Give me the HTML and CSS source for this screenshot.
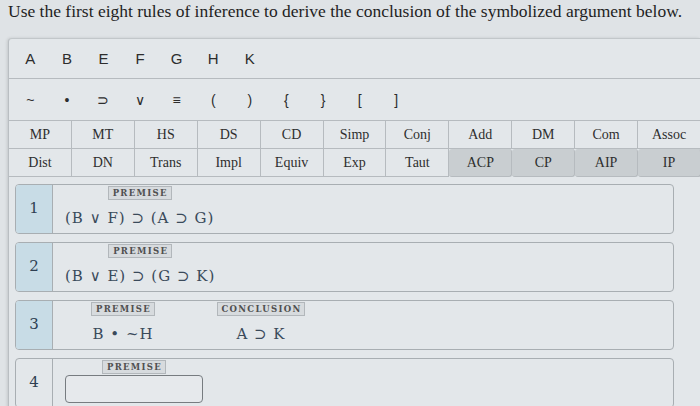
FILE: index.html
```html
<!DOCTYPE html>
<html>
<head>
<meta charset="utf-8">
<link rel="stylesheet" href="styles.css">
</head>
<body>
<p class="title">Use the first eight rules of inference to derive the conclusion of the symbolized argument below.</p>
<div class="panel">
  <div class="keys vars">
    <span>A</span><span>B</span><span>E</span><span>F</span><span>G</span><span>H</span><span>K</span>
  </div>
  <div class="keys ops">
    <span>~</span><span>•</span><span>⊃</span><span>∨</span><span>≡</span><span>(</span><span>)</span><span>{</span><span>}</span><span>[</span><span>]</span>
  </div>
  <div class="rules">
    <div class="rule">MP</div><div class="rule">MT</div><div class="rule">HS</div><div class="rule">DS</div><div class="rule">CD</div><div class="rule">Simp</div><div class="rule">Conj</div><div class="rule">Add</div><div class="rule">DM</div><div class="rule">Com</div><div class="rule">Assoc</div>
    <div class="rule">Dist</div><div class="rule">DN</div><div class="rule">Trans</div><div class="rule">Impl</div><div class="rule">Equiv</div><div class="rule">Exp</div><div class="rule">Taut</div><div class="rule dark">ACP</div><div class="rule dark">CP</div><div class="rule dark">AIP</div><div class="rule dark">IP</div>
  </div>
  <div class="lines">
    <div class="line">
      <div class="num given">1</div>
      <div class="body">
        <div class="stack"><span class="tag">PREMISE</span><span class="formula">(B ∨ F) ⊃ (A ⊃ G)</span></div>
      </div>
    </div>
    <div class="line">
      <div class="num given">2</div>
      <div class="body">
        <div class="stack"><span class="tag">PREMISE</span><span class="formula">(B ∨ E) ⊃ (G ⊃ K)</span></div>
      </div>
    </div>
    <div class="line">
      <div class="num given">3</div>
      <div class="body">
        <div class="stack"><span class="tag">PREMISE</span><span class="formula">B • ~H</span></div>
        <div class="stack"><span class="tag">CONCLUSION</span><span class="formula">A ⊃ K</span></div>
      </div>
    </div>
    <div class="line">
      <div class="num">4</div>
      <div class="body">
        <div class="stack"><span class="tag">PREMISE</span><span class="input"></span></div>
      </div>
    </div>
  </div>
</div>
</body>
</html>
```
FILE: styles.css
```css
html, body {
  margin: 0;
  padding: 0;
  background: #dfe3e6;
  overflow: hidden;
}
.title {
  margin: 1px 0 0 8px;
  font-family: "Liberation Serif", serif;
  font-size: 17.5px;
  line-height: 21px;
  color: #1e1e1e;
  white-space: nowrap;
}
.panel {
  margin: 16px 0 0 8px;
  background: #e3e7ea;
  border-top: 1px solid #c2c7ca;
  border-left: 1px solid #b9bec2;
  border-top-left-radius: 4px;
  box-shadow: -1px 0 3px rgba(0,0,0,0.12);
  height: 400px;
}
.keys {
  display: flex;
  align-items: center;
  padding-left: 3px;
  font-family: "Liberation Sans", Arial, sans-serif;
  color: #2d2d2d;
  border-bottom: 1px solid #b6bbbf;
}
.keys span {
  width: 36.6px;
  text-align: center;
}
.vars {
  height: 39px;
  font-size: 15px;
}
.ops {
  height: 41px;
  font-size: 14px;
}
.rules {
  display: grid;
  grid-template-columns: repeat(11, 1fr);
  width: 692px;
}
.rule {
  height: 27px;
  display: flex;
  align-items: center;
  justify-content: center;
  font-family: "Liberation Serif", serif;
  font-size: 14px;
  color: #2e2e2e;
  border-right: 1px solid #b6bbbf;
  border-bottom: 1px solid #b6bbbf;
}
.rule.dark {
  background: #c9ced1;
  border-radius: 3px;
}
.lines {
  padding: 7px 0 0 6px;
  display: flex;
  flex-direction: column;
  gap: 8px;
}
.line {
  width: 657px;
  height: 48px;
  display: flex;
  border: 1px solid #a8aeb2;
  border-radius: 4px;
  overflow: hidden;
}
.num {
  width: 37px;
  flex: none;
  display: flex;
  align-items: center;
  justify-content: center;
  border-right: 1px solid #a8aeb2;
  font-family: "DejaVu Serif", serif;
  font-size: 15px;
  color: #2e3f52;
  padding-bottom: 3px;
  box-sizing: border-box;
}
.num.given {
  background: #c8dce6;
}
.body {
  display: flex;
  gap: 22px;
  padding: 1px 0 0 12px;
}
.stack {
  min-width: 116px;
  display: flex;
  flex-direction: column;
  align-items: center;
}
.tag {
  font-family: "DejaVu Serif", serif;
  font-size: 8.5px;
  font-weight: bold;
  letter-spacing: 1.3px;
  color: #505050;
  background: #d7dbde;
  border: 1px solid #b2b7bb;
  padding: 1px 3px 0 4px;
  line-height: 11px;
}
.formula {
  margin-top: 9px;
  font-family: "DejaVu Serif", serif;
  font-size: 15px;
  color: #3a4a5a;
  letter-spacing: 1px;
  white-space: nowrap;
}
.input {
  margin-top: 1px;
  width: 136px;
  height: 26px;
  border: 1px solid #777c80;
  border-radius: 4px;
  background: #e6e9ec;
}
```
